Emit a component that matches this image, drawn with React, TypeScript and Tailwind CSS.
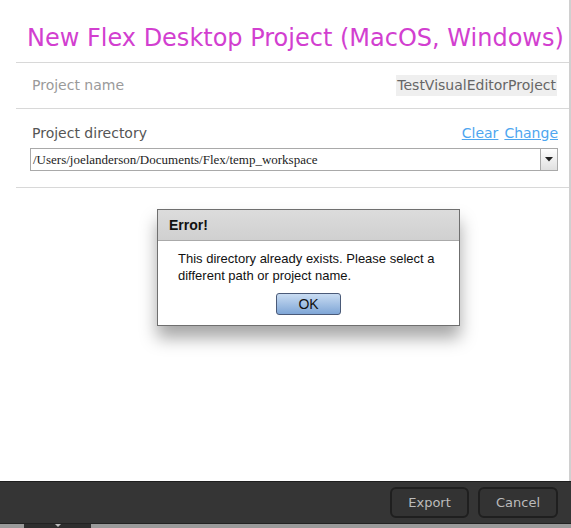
import React from "react";

export default function App() {
  return (
    <div className="w-[571px] h-[528px] flex flex-col bg-white overflow-hidden relative">
      <div className="flex flex-1 min-h-0">
        <div className="flex-1 flex flex-col bg-white">
          <div className="h-[62px] flex items-end pl-[27px] pb-[12px]">
            <h1 className="text-[24px] leading-none text-[#d23fd0] font-['DejaVu_Sans',sans-serif] whitespace-nowrap">
              New Flex Desktop Project (MacOS, Windows)
            </h1>
          </div>
          <div className="ml-[16px] h-[1px] bg-[#d8d8d8]" />
          <div className="h-[45px] flex items-center justify-between pl-[32px] pr-[12px] pb-[1px] font-['DejaVu_Sans',sans-serif] text-[14px]">
            <span className="text-[#9a9a9a]">Project name</span>
            <span className="text-[#666] bg-[#efefef] px-[1px]">TestVisualEditorProject</span>
          </div>
          <div className="ml-[16px] h-[1px] bg-[#d8d8d8]" />
          <div className="pl-[30px] pr-[11px] pt-[14px] font-['DejaVu_Sans',sans-serif]">
            <div className="flex items-center justify-between pl-[2px] h-[20px]">
              <span className="text-[14px] text-[#555]">Project directory</span>
              <span className="text-[14px] text-[#4ea6ef] flex gap-[6px]">
                <span className="underline">Clear</span>
                <span className="underline">Change</span>
              </span>
            </div>
            <div className="mt-[5px] h-[23px] flex border border-[#a9a9a9] bg-white">
              <div className="flex-1 flex items-center pl-[2px] text-[13px] text-[#222] font-['Liberation_Serif',serif]">
                /Users/joelanderson/Documents/Flex/temp_workspace
              </div>
              <div className="w-[17px] border-l border-[#a9a9a9] bg-gradient-to-b from-white to-[#e0e0e0] flex items-center justify-center">
                <svg width="8" height="5" viewBox="0 0 8 5"><path d="M0 0h8L4 4.5z" fill="#222" /></svg>
              </div>
            </div>
          </div>
          <div className="mt-[16px] ml-[16px] h-[1px] bg-[#d8d8d8]" />
          <div className="flex-1 relative">
            <div className="absolute left-[157px] top-[21px] w-[303px] border border-[#6f6f6f] bg-white shadow-[0_12px_16px_rgba(0,0,0,0.35)] font-['Liberation_Sans',sans-serif]">
              <div className="h-[31px] bg-gradient-to-b from-[#dcdcdc] to-[#d0d0d0] border-b border-[#aaa] flex items-center pl-[11px] text-[14px] font-bold text-[#111]">
                Error!
              </div>
              <div className="pl-[20px] pr-[10px] pt-[9px] text-[13px] leading-[17px] text-[#111] whitespace-nowrap">
                This directory already exists. Please select a
                <br />
                different path or project name.
              </div>
              <div className="flex justify-center pt-[9px] pb-[10px]">
                <div className="w-[65px] h-[22px] rounded-[3px] border border-[#4a5a78] bg-gradient-to-b from-[#c9dcf2] to-[#7fa6d6] flex items-center justify-center text-[14px] text-[#111]">
                  OK
                </div>
              </div>
            </div>
          </div>
        </div>
        <div className="w-[2px] bg-[#d0d0d0]" />
      </div>
      <div className="h-[42px] bg-[#353535] border-t border-[#1e1e1e] flex items-start justify-end gap-[9px] pr-[13px] pt-[5px] font-['DejaVu_Sans',sans-serif]">
        <div className="w-[79px] h-[31px] rounded-[6px] border-[2px] border-[#1f1f1f] bg-[#333] flex items-center justify-center text-[13px] text-[#bbb]">
          Export
        </div>
        <div className="w-[80px] h-[31px] rounded-[6px] border-[2px] border-[#1f1f1f] bg-[#333] flex items-center justify-center text-[13px] text-[#bbb]">
          Cancel
        </div>
      </div>
      <div className="h-[5px] bg-[#9a9a9a] border-t border-[#222] flex">
        <div className="ml-[24px] w-[67px] bg-[#2e2e2e] flex justify-center">
          <svg width="6" height="4" viewBox="0 0 6 4"><path d="M0 0h6L3 3z" fill="#bbb" /></svg>
        </div>
      </div>
    </div>
  );
}
